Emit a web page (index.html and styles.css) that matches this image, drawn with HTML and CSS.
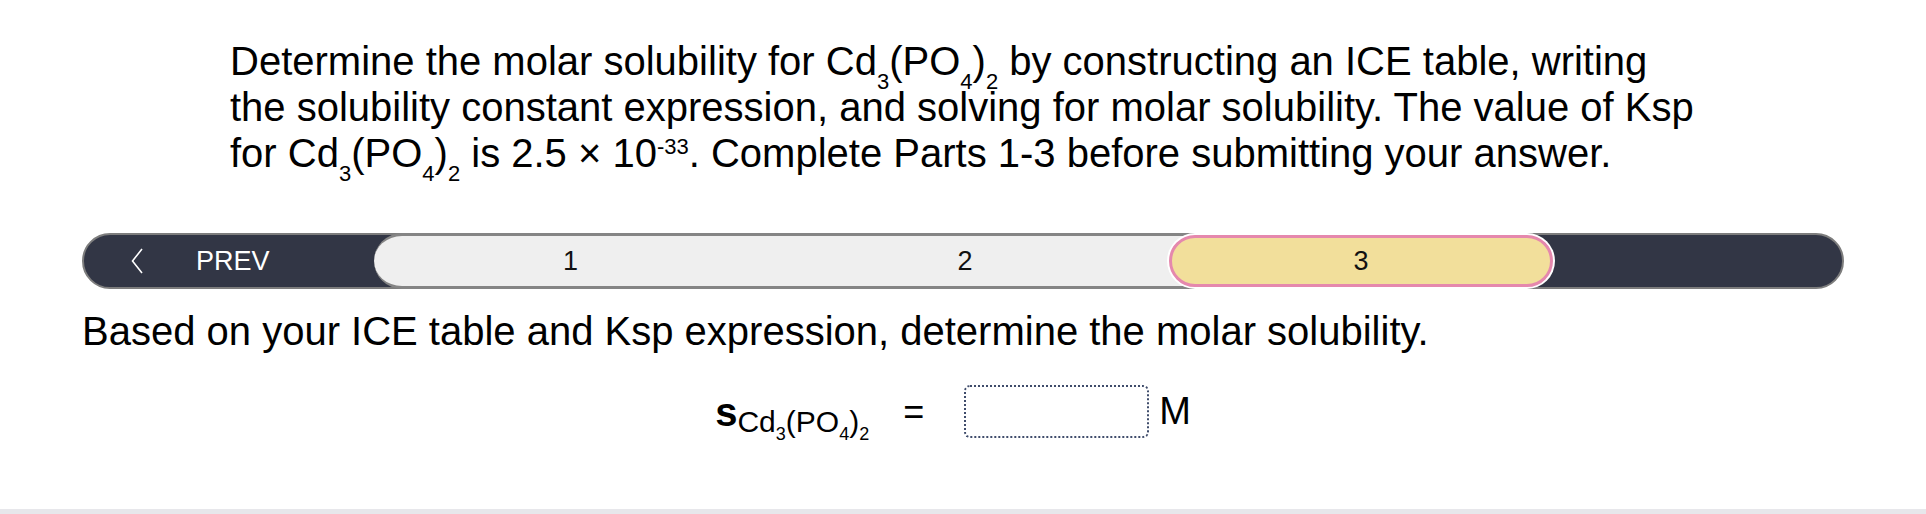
FILE: index.html
```html
<!DOCTYPE html>
<html lang="en">
<head>
<meta charset="utf-8">
<title>Molar solubility</title>
<link rel="stylesheet" href="styles.css">
</head>
<body>
<main class="content">
  <p class="prompt">Determine the molar solubility for Cd<sub>3</sub>(PO<sub>4</sub>)<sub>2</sub> by constructing an ICE table, writing the solubility constant expression, and solving for molar solubility. The value of Ksp for Cd<sub>3</sub>(PO<sub>4</sub>)<sub>2</sub> is 2.5 × 10<sup>-33</sup>. Complete Parts 1-3 before submitting your answer.</p>

  <nav class="stepper">
    <div class="prev">
      <svg class="chev" viewBox="0 0 14 26" width="14" height="26" aria-hidden="true"><path d="M12 1 L2.5 13 L12 25" fill="none" stroke="#ffffff" stroke-width="1.6"/></svg>
      <span class="prev-label">PREV</span>
    </div>
    <div class="step light first">1</div>
    <div class="step light">2</div>
    <div class="step current"><span class="pill">3</span></div>
    <div class="rest"></div>
  </nav>

  <p class="question">Based on your ICE table and Ksp expression, determine the molar solubility.</p>

  <div class="answer">
    <span class="var"><span class="s">s</span><span class="formula">Cd<sub>3</sub>(PO<sub>4</sub>)<sub>2</sub></span></span>
    <span class="eq">=</span>
    <input class="field" type="text" aria-label="molar solubility">
    <span class="unit">M</span>
  </div>
</main>
<footer class="footer"></footer>
</body>
</html>
```

FILE: styles.css
```css
html, body {
  margin: 0;
  padding: 0;
  background: #ffffff;
}

body {
  display: flex;
  flex-direction: column;
  min-height: 100vh;
  font-family: "Liberation Sans", Arial, Helvetica, sans-serif;
  color: #000000;
}

.content {
  margin: 0 82px;
}

.prompt {
  margin: 38px 148px 0 148px;
  font-size: 40px;
  line-height: 46px;
}

.prompt sub {
  font-size: 22px;
  line-height: 0;
  vertical-align: -14px;
}

.prompt sup {
  font-size: 22px;
  line-height: 0;
  vertical-align: 13px;
}

/* stepper */
.stepper {
  margin-top: 57px;
  height: 56px;
  box-sizing: border-box;
  display: flex;
  border: 2px solid #7d7d7d;
  border-radius: 28px;
  background: #323645;
}

.prev {
  flex: 0 0 290px;
  display: flex;
  align-items: center;
  padding-left: 46px;
  box-sizing: border-box;
  color: #ffffff;
}

.chev {
  display: block;
}

.prev-label {
  margin-left: 52px;
  font-size: 27px;
}

.step {
  flex: 0 0 396px;
  margin: -2px 0;
  box-sizing: border-box;
  display: flex;
  align-items: center;
  justify-content: center;
  font-size: 27px;
  color: #111111;
}

.step.light {
  background: #efefef;
  border-top: 3px solid #858585;
  border-bottom: 3px solid #858585;
}

.step.first {
  flex-basis: 393px;
  border-radius: 28px 0 0 28px;
  border-left: 0;
}

.step.current {
  padding: 2px 6px;
  background:
    linear-gradient(#858585, #858585) left top / 30px 3px no-repeat,
    linear-gradient(#858585, #858585) left bottom / 30px 3px no-repeat,
    linear-gradient(#efefef, #efefef) left center / 30px 100% no-repeat;
}

.pill {
  flex: 1;
  align-self: stretch;
  display: flex;
  align-items: center;
  justify-content: center;
  background: #f2df9b;
  border: 3px solid #e588ad;
  border-radius: 26px;
  box-shadow: 0 0 0 2px #ffffff;
}

.rest {
  flex: 1;
}

/* question */
.question {
  margin: 19px 0 0 0;
  font-size: 40px;
  line-height: 46px;
}

.answer {
  margin-top: 31px;
  margin-right: 20px;
  display: flex;
  align-items: center;
  justify-content: center;
  height: 53px;
}

.var {
  display: flex;
  align-items: baseline;
  line-height: 1;
}

.s {
  font-size: 40px;
  font-weight: bold;
}

.formula {
  font-size: 30px;
  position: relative;
  top: 6px;
}

.formula sub {
  font-size: 18px;
  line-height: 0;
  vertical-align: -8px;
}

.eq {
  margin-left: 34px;
  font-size: 36px;
}

.field {
  margin-left: 40px;
  width: 185px;
  height: 53px;
  box-sizing: border-box;
  border: 2px dotted #3f4c6b;
  border-radius: 6px;
  background: #ffffff;
  padding: 0 8px;
  font: inherit;
  font-size: 28px;
  outline: none;
}

.unit {
  margin-left: 10px;
  font-size: 38px;
}

.footer {
  margin-top: auto;
  height: 5px;
  background: #e7e7eb;
}
```
